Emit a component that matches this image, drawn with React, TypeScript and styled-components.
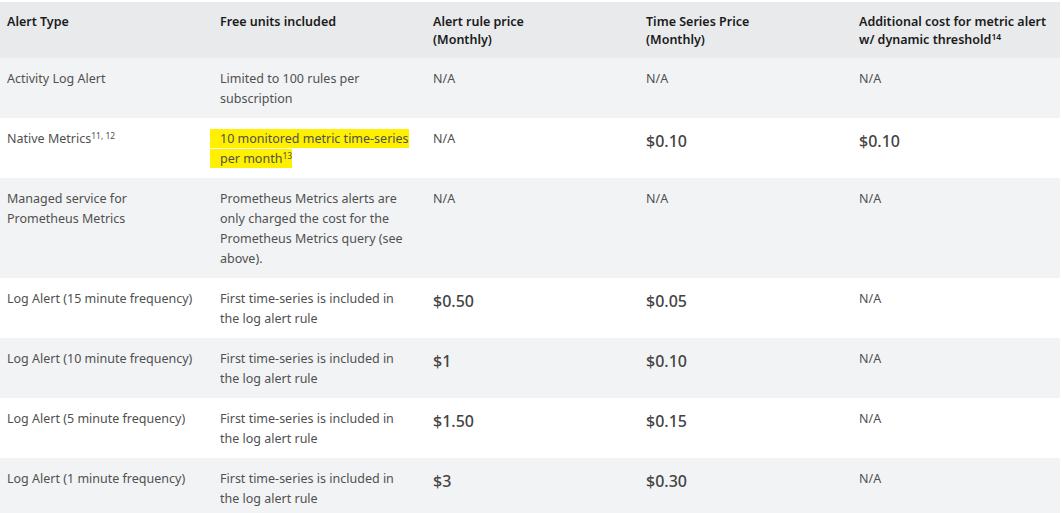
import React from "react";
import styled, { createGlobalStyle } from "styled-components";

const Global = createGlobalStyle`
  html, body { margin: 0; padding: 0; background: #ffffff; }
  body { font-family: "Segoe UI", "Noto Sans", sans-serif; }
`;

const Page = styled.div`
  padding-top: 2px;
`;

const Table = styled.table`
  width: 1060px;
  border-collapse: collapse;
  table-layout: fixed;
  font-family: "Segoe UI", "Noto Sans", sans-serif;
`;

const Col = styled.col<{ $w: number }>`
  width: ${(p) => p.$w}px;
`;

const HeadRow = styled.tr`
  background: #e9eaec;
`;

const Th = styled.th`
  text-align: left;
  vertical-align: top;
  padding: 11px 13px 9px 7px;
  font-size: 12.5px;
  line-height: 18px;
  font-weight: 600;
  color: #1b1b1b;
`;

const Row = styled.tr<{ $alt: boolean }>`
  background: ${(p) => (p.$alt ? "#f2f3f5" : "#ffffff")};
`;

const Td = styled.td`
  vertical-align: top;
  padding: 11px 13px 9px 7px;
  font-size: 12.5px;
  line-height: 20px;
  color: #505050;
`;

const Price = styled.span`
  display: block;
  font-size: 16px;
  line-height: 24px;
  font-weight: 500;
  color: #434343;
`;

const Sup = styled.sup`
  font-size: 8.5px;
  line-height: 0;
  vertical-align: 4px;
`;

const Highlight = styled.span`
  background: #fff000;
  box-decoration-break: clone;
  -webkit-box-decoration-break: clone;
  padding: 1px 0 1px 10px;
  margin-left: -10px;
`;

type Cell = React.ReactNode;

const rows: { cells: Cell[] }[] = [
  { cells: ["Activity Log Alert", "Limited to 100 rules per subscription", "N/A", "N/A", "N/A"] },
  {
    cells: [
      <>Native Metrics<Sup>11, 12</Sup></>,
      <Highlight>10 monitored metric time-series per month<Sup>13</Sup></Highlight>,
      "N/A",
      <Price>$0.10</Price>,
      <Price>$0.10</Price>,
    ],
  },
  {
    cells: [
      "Managed service for Prometheus Metrics",
      "Prometheus Metrics alerts are only charged the cost for the Prometheus Metrics query (see above).",
      "N/A",
      "N/A",
      "N/A",
    ],
  },
  {
    cells: [
      "Log Alert (15 minute frequency)",
      "First time-series is included in the log alert rule",
      <Price>$0.50</Price>,
      <Price>$0.05</Price>,
      "N/A",
    ],
  },
  {
    cells: [
      "Log Alert (10 minute frequency)",
      "First time-series is included in the log alert rule",
      <Price>$1</Price>,
      <Price>$0.10</Price>,
      "N/A",
    ],
  },
  {
    cells: [
      "Log Alert (5 minute frequency)",
      "First time-series is included in the log alert rule",
      <Price>$1.50</Price>,
      <Price>$0.15</Price>,
      "N/A",
    ],
  },
  {
    cells: [
      "Log Alert (1 minute frequency)",
      "First time-series is included in the log alert rule",
      <Price>$3</Price>,
      <Price>$0.30</Price>,
      "N/A",
    ],
  },
];

export default function App() {
  return (
    <Page>
      <Global />
      <Table>
        <colgroup>
          <Col $w={213} />
          <Col $w={213} />
          <Col $w={213} />
          <Col $w={213} />
          <Col $w={208} />
        </colgroup>
        <thead>
          <HeadRow>
            <Th>Alert Type</Th>
            <Th>Free units included</Th>
            <Th>
              Alert rule price
              <br />
              (Monthly)
            </Th>
            <Th>
              Time Series Price
              <br />
              (Monthly)
            </Th>
            <Th>
              Additional cost for metric alert
              <br />
              w/ dynamic threshold<Sup>14</Sup>
            </Th>
          </HeadRow>
        </thead>
        <tbody>
          {rows.map((r, i) => (
            <Row key={i} $alt={i % 2 === 0}>
              {r.cells.map((c, j) => (
                <Td key={j}>{c}</Td>
              ))}
            </Row>
          ))}
        </tbody>
      </Table>
    </Page>
  );
}
